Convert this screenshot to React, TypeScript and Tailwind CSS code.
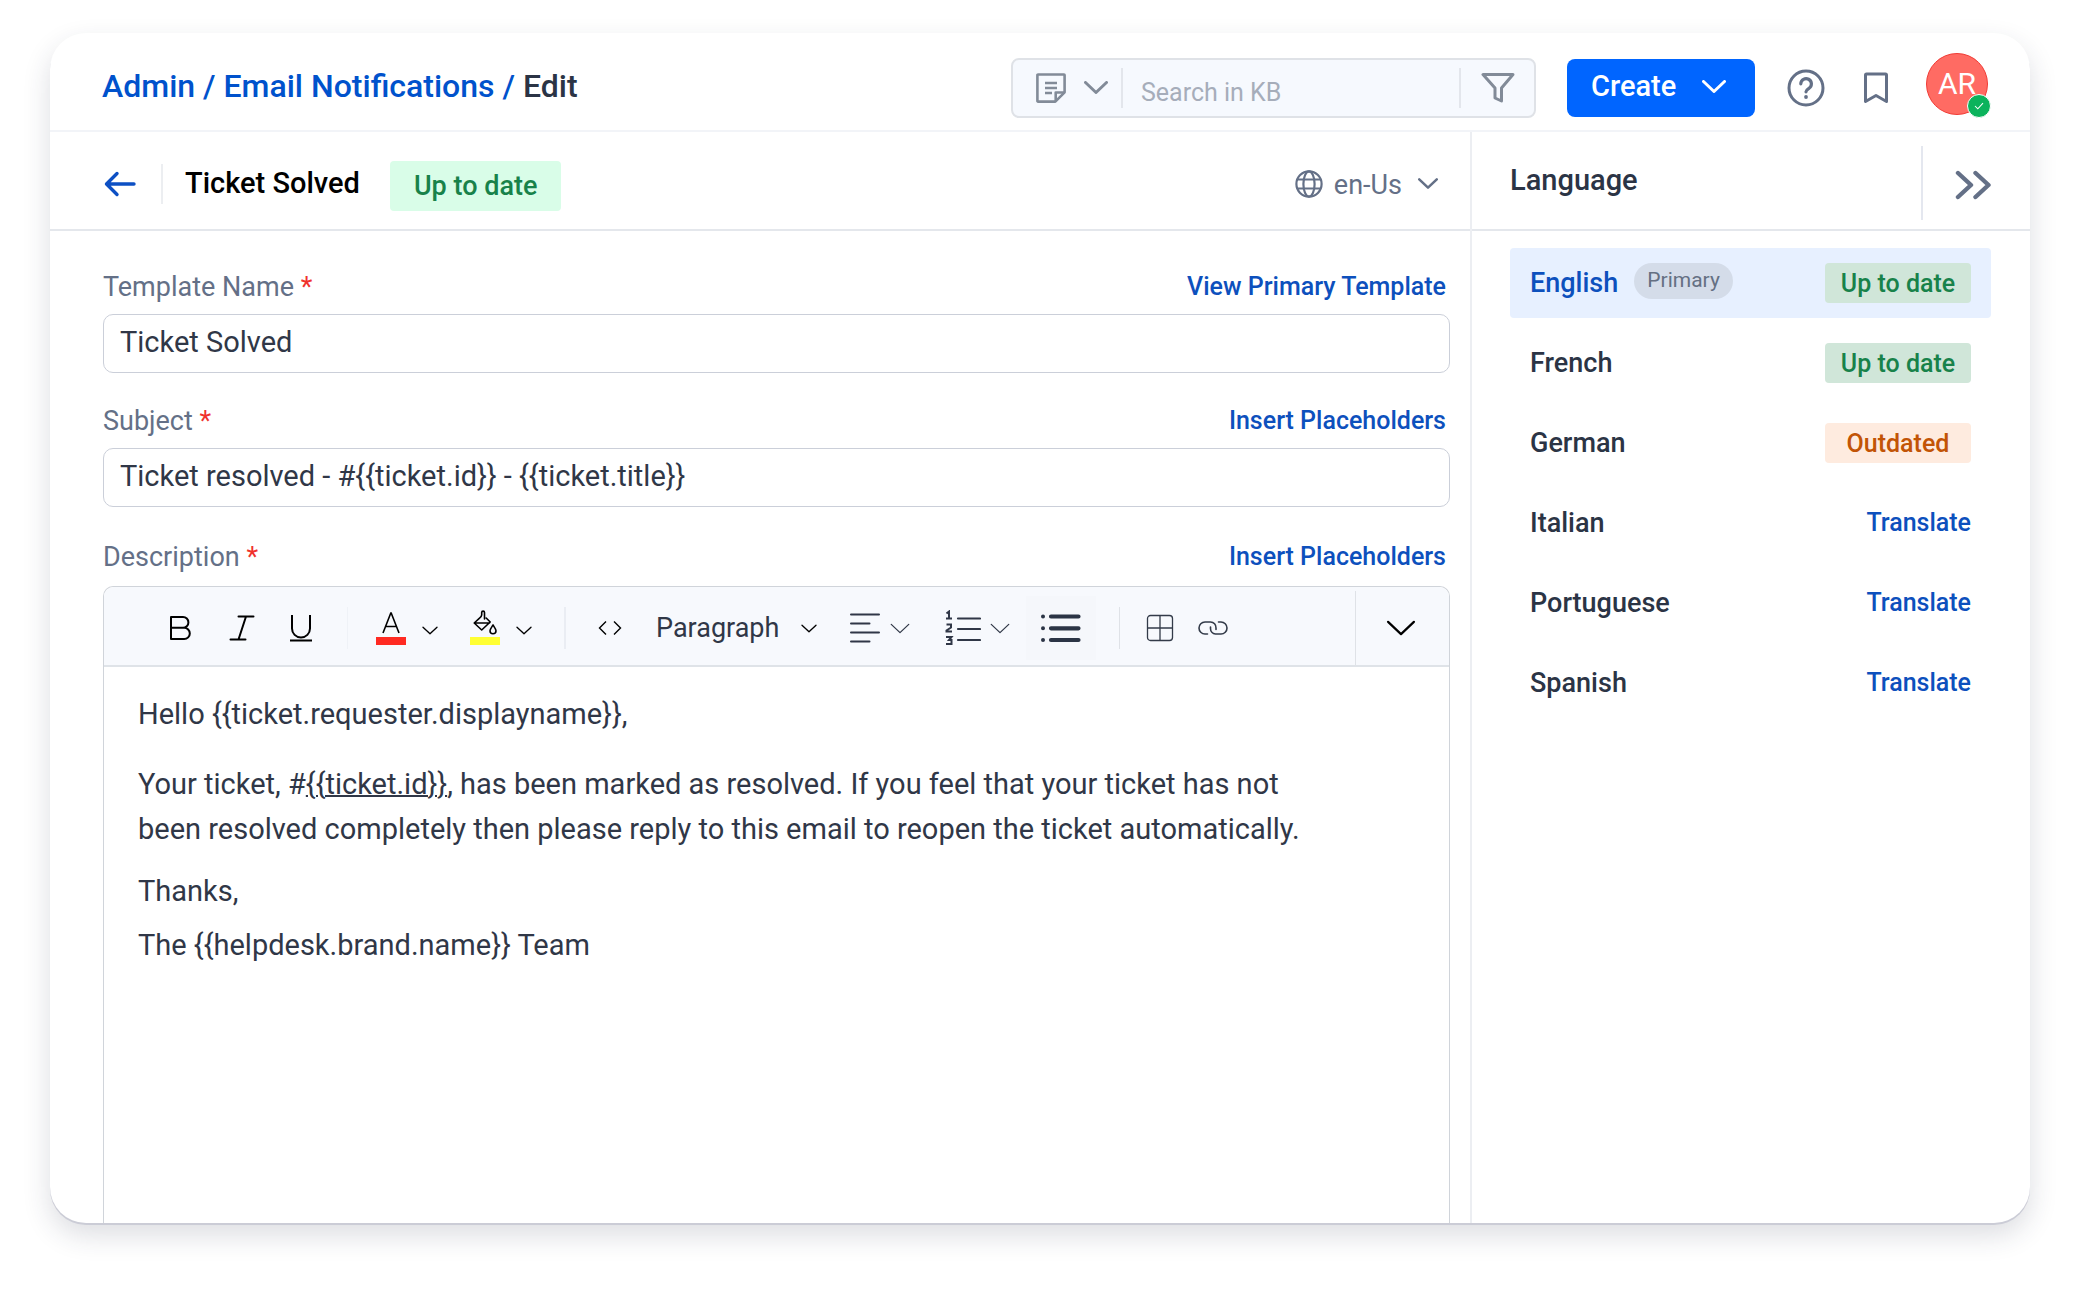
import { FC, InputHTMLAttributes, ReactElement, ReactNode } from 'react'

type IconProps = {
  className?: string
}

type LanguageStatus = 'current' | 'outdated' | 'missing'

type Language = {
  name: string
  status: LanguageStatus
  primary?: boolean
}

const languages: Language[] = [
  { name: 'English', status: 'current', primary: true },
  { name: 'French', status: 'current' },
  { name: 'German', status: 'outdated' },
  { name: 'Italian', status: 'missing' },
  { name: 'Portuguese', status: 'missing' },
  { name: 'Spanish', status: 'missing' },
]

const ChevronIcon: FC<IconProps> = ({ className }): ReactElement => (
  <svg viewBox="0 0 24 13" fill="none" stroke="currentColor" className={className}>
    <path d="M1.5 1.5 12 11.5 22.5 1.5" strokeLinecap="round" strokeLinejoin="round" />
  </svg>
)

const NoteIcon = (): ReactElement => (
  <svg viewBox="0 0 30 30" fill="none" stroke="currentColor" className="size-[30px]">
    <path d="M2 1.5h26a.6.6 0 0 1 .6.6v17.2L19.3 28.6H2a.6.6 0 0 1-.6-.6V2.100a.6.6 0 0 1 .6-.6Z" strokeWidth="2.600" strokeLinejoin="round" />
    <path d="M28.500 19.500h-8.800v9" strokeWidth="2.600" strokeLinejoin="round" />
    <path d="M9 10h12M9 15h12M9 20h7" strokeWidth="2.400" />
  </svg>
)

const FilterIcon = (): ReactElement => (
  <svg viewBox="0 0 34 30" fill="none" stroke="currentColor" className="h-[30px] w-[34px]">
    <path d="M2 1.5h30L20.5 15v13l-6.500-3V15L2 1.5Z" strokeWidth="3" strokeLinejoin="round" />
  </svg>
)

const HelpIcon = (): ReactElement => (
  <svg viewBox="0 0 38 38" fill="none" stroke="currentColor" className="size-[38px]">
    <circle cx="19" cy="19" r="17" strokeWidth="3" />
    <path d="M13.8 14.8a5.300 5.300 0 1 1 8.300 4.500c-1.900 1.200-3.100 1.900-3.100 3.500" strokeWidth="3.200" strokeLinecap="round" />
    <circle cx="19" cy="28" r="1.900" fill="currentColor" stroke="none" />
  </svg>
)

const BookmarkIcon = (): ReactElement => (
  <svg viewBox="0 0 26 32" fill="none" stroke="currentColor" className="h-8 w-[26px]">
    <path d="M3.5 2h19a1 1 0 0 1 1 1v26.5L13 23.5 2.5 29.5V3a1 1 0 0 1 1-1Z" strokeWidth="3" strokeLinejoin="round" />
  </svg>
)

const GlobeIcon = (): ReactElement => (
  <svg viewBox="0 0 28 28" fill="none" stroke="currentColor" strokeWidth="2.2" className="size-7">
    <circle cx="14" cy="14" r="12.6" />
    <ellipse cx="14" cy="14" rx="5.6" ry="12.6" />
    <path d="M2 9.5h24M2 18.5h24" />
  </svg>
)

const BackIcon = (): ReactElement => (
  <svg viewBox="0 0 32 26" fill="none" stroke="currentColor" strokeWidth="3.4" strokeLinecap="round" strokeLinejoin="round" className="h-[26px] w-8">
    <path d="M30 13H2.5M13 2.5 2.5 13 13 23.5" />
  </svg>
)

const CollapseIcon = (): ReactElement => (
  <svg viewBox="0 0 36 30" fill="none" stroke="currentColor" strokeWidth="4.400" strokeLinecap="round" strokeLinejoin="round" className="h-[30px] w-9">
    <path d="M3 3l13 12L3 27M20.5 3l13 12-13 12" />
  </svg>
)

const BoldIcon = (): ReactElement => (
  <svg viewBox="0 0 24 26" fill="none" stroke="currentColor" strokeWidth="2" strokeLinejoin="round" className="h-[26px] w-6">
    <path d="M2 2h12a5.4 5.4 0 0 1 0 10.8H2V2ZM2 12.8h13.200a5.600 5.600 0 0 1 0 11.200H2V12.800Z" />
  </svg>
)

const ItalicIcon = (): ReactElement => (
  <svg viewBox="0 0 26 26" fill="none" stroke="currentColor" strokeWidth="2" strokeLinecap="round" className="size-[26px]">
    <path d="M9.5 1.5h15M1.5 24.5h15M17 1.5 9.5 24.5" />
  </svg>
)

const UnderlineIcon = (): ReactElement => (
  <svg viewBox="0 0 24 28" fill="none" stroke="currentColor" strokeWidth="2" className="h-7 w-6">
    <path d="M3 1v13.5a9 9 0 0 0 18 0V1M1 26.5h22" />
  </svg>
)

const TextColorIcon = (): ReactElement => (
  <svg viewBox="0 0 30 36" fill="none" className="h-9 w-[30px]">
    <path d="M7 23 15 2.5 23 23M9.5 16.5h11" stroke="currentColor" strokeWidth="1.6" strokeLinejoin="bevel" />
    <path d="M0 27h30v8H0z" fill="#ff2a22" />
  </svg>
)

const FillColorIcon = (): ReactElement => (
  <svg viewBox="0 0 30 36" fill="none" className="h-9 w-[30px]">
    <g stroke="currentColor" strokeWidth="1.6" strokeLinejoin="round" strokeLinecap="round">
      <path d="M14.500 9V2.500a1.200 1.200 0 0 0-2.800 0V5c0 1.500-1.200 2.500-2.700 3.700L4.200 13l7.500 7 8.500-8-4-4M4.500 13h15" />
      <path d="M23 15c1.800 2.700 3 4.300 3 5.800a3 3 0 0 1-6 0c0-1.500 1.200-3.100 3-5.800Z" />
    </g>
    <path d="M0 27h30v8H0z" fill="#ffff33" />
  </svg>
)

const CodeIcon = (): ReactElement => (
  <svg viewBox="0 0 24 16" fill="none" stroke="currentColor" strokeWidth="1.4" className="h-4 w-6">
    <path d="M8 1.5 1.5 8 8 14.5M16 1.5 22.5 8 16 14.5" />
  </svg>
)

const AlignIcon = (): ReactElement => (
  <svg viewBox="0 0 32 32" stroke="currentColor" strokeWidth="2" strokeLinecap="round" className="size-8">
    <path d="M2 2.500h28M2 11.500h18.500M2 20.500h28M2 29.500h18.500" />
  </svg>
)

const NumberedListIcon = (): ReactElement => (
  <svg viewBox="0 0 36 36" fill="none" stroke="currentColor" className="size-9">
    <path d="M13 8.5h22M13 19h22M13 30h22" strokeWidth="2.2" strokeLinecap="round" />
    <path d="M1.5 3.5 4 1.5V8M1 8.5h6M1.500 14.500H6v3L1.500 20.500v1H7M1 27h5.500L4 30h2.500v4H1" strokeWidth="2" />
  </svg>
)

const BulletListIcon = (): ReactElement => (
  <svg viewBox="0 0 40 30" stroke="currentColor" strokeLinecap="round" className="h-[30px] w-10">
    <path d="M10 3.500h27.500M10 15.300h27.500M10 27h27.500" strokeWidth="4.200" />
    <path d="M2 3.500h.01M2 15.300h.01M2 27h.01" strokeWidth="4" />
  </svg>
)

const TableIcon = (): ReactElement => (
  <svg viewBox="0 0 28 28" fill="none" stroke="currentColor" strokeWidth="1.3" className="size-7">
    <rect x="1.5" y="1.5" width="25" height="25" rx="3" />
    <path d="M14 1.5v25M1.5 14h25" />
  </svg>
)

const LinkIcon = (): ReactElement => (
  <svg viewBox="0 0 30 16" fill="none" stroke="currentColor" strokeWidth="1.6" strokeLinecap="round" className="h-4 w-[30px]">
    <path d="M9.5 14H7A6 6 0 0 1 7 2h5.500A5.500 5.500 0 0 1 18 8v1.500" />
    <path d="M20.500 2H23a6 6 0 0 1 0 12h-5.500A5.500 5.500 0 0 1 12.500 8.500V7" />
  </svg>
)

type FieldHeaderProps = {
  id: string
  label: string
  action: ReactNode
}

type FieldProps = InputHTMLAttributes<HTMLInputElement> & FieldHeaderProps

const FieldHeader: FC<FieldHeaderProps> = ({ id, label, action }): ReactElement => (
  <div className="flex h-8 items-center justify-between pr-1">
    <label id={`${id}-label`} htmlFor={id} className="text-[27px] leading-8 text-[#647087]">
      {label} <span className="text-[#f0322d]">*</span>
    </label>
    {action}
  </div>
)

const ActionLink: FC<{ children: ReactNode }> = ({ children }): ReactElement => (
  <a href="#" className="text-[25px] leading-8 font-medium text-[#0d50bd]">
    {children}
  </a>
)

const Field: FC<FieldProps> = ({ id, label, action, ...rest }): ReactElement => (
  <div className="flex flex-col gap-[11px]">
    <FieldHeader id={id} label={label} action={action} />
    <input
      id={id}
      className="h-[59px] w-full rounded-[10px] border border-[#cbcfd9] bg-white px-4 pb-1 text-[29px] text-[#303747]"
      {...rest}
    />
  </div>
)

const TopBar = (): ReactElement => (
  <header className="flex h-[99px] items-center justify-between border-b-2 border-[#f2f4f8] pt-3 pr-[42px] pl-[52px]">
    <nav aria-label="Breadcrumb" className="pb-1 text-[32px] font-medium text-[#0052cc]">
      <a href="#">Admin</a> / <a href="#">Email Notifications</a> / <span className="text-[#2b3445]">Edit</span>
    </nav>
    <div className="flex items-center">
      <div className="flex h-[60px] w-[525px] items-center rounded-lg border-2 border-[#dfe2e7] bg-[#f6f9fe] text-[#828b98]">
        <button type="button" aria-label="Search scope" className="flex items-center gap-[18px] pr-[13px] pl-[23px]">
          <NoteIcon />
          <ChevronIcon className="h-[13px] w-6 stroke-3" />
        </button>
        <input
          aria-label="Search in KB"
          placeholder="Search in KB"
          className="h-10 min-w-0 flex-1 border-x-2 border-[#e3e6ec] px-[18px] pt-[10px] text-[25px] placeholder:text-[#a6adba]"
        />
        <button type="button" aria-label="Filter" className="pr-[19px] pl-5">
          <FilterIcon />
        </button>
      </div>
      <button type="button" className="ml-[31px] flex h-[58px] w-[188px] items-center justify-between rounded-lg bg-[#0065ff] pr-[29px] pb-0.5 pl-6 text-[29px] font-medium text-white">
        Create
        <ChevronIcon className="h-[13px] w-6 stroke-3" />
      </button>
      <button type="button" aria-label="Help" className="ml-8 text-[#647087]">
        <HelpIcon />
      </button>
      <button type="button" aria-label="Bookmarks" className="ml-[38px] text-[#647087]">
        <BookmarkIcon />
      </button>
      <button type="button" aria-label="Account" className="relative mb-2 ml-[37px] size-[62px] rounded-full border border-[#f03c36] bg-[#ff6b63] text-[30px] leading-[54px] text-white">
        AR
        <span className="absolute -right-1 -bottom-1 flex size-6 items-center justify-center rounded-full border border-white bg-[#0bb35c]">
          <svg viewBox="0 0 12 10" fill="none" stroke="currentColor" className="h-2 w-2.5">
            <path d="M1 5l3.5 3.5L11 1.5" strokeWidth="1.3" />
          </svg>
        </span>
      </button>
    </div>
  </header>
)

const TemplateBar = (): ReactElement => (
  <div className="flex h-[99px] items-center justify-between border-b-2 border-[#e4e7ec] pt-1.5 pr-8 pl-[54px]">
    <div className="flex items-center">
      <button type="button" aria-label="Back" className="text-[#0d50c4]">
        <BackIcon />
      </button>
      <div className="ml-[25px] h-10 w-0.5 bg-[#eceef1]" />
      <h1 className="ml-[22px] text-[29px] font-medium text-black">Ticket Solved</h1>
      <span className="mt-1 ml-[30px] flex h-[50px] items-center rounded-sm bg-[#d9fde8] px-6 pt-0.5 text-[27px] font-medium text-[#18824a]">
        Up to date
      </span>
    </div>
    <button type="button" className="flex items-center text-[#647087]">
      <GlobeIcon />
      <span className="mt-1 ml-[11px] text-[27px]">en-Us</span>
      <ChevronIcon className="ml-4 h-[11px] w-5 stroke-3" />
    </button>
  </div>
)

const Toolbar = (): ReactElement => (
  <div role="toolbar" className="flex h-20 items-center rounded-t-[10px] border-b-2 border-[#dfe3e8] bg-[#f7f9fd] pt-1 pl-[65px] text-black">
    <button type="button" aria-label="Bold">
      <BoldIcon />
    </button>
    <button type="button" aria-label="Italic" className="ml-9">
      <ItalicIcon />
    </button>
    <button type="button" aria-label="Underline" className="ml-[34px]">
      <UnderlineIcon />
    </button>
    <div className="ml-[34px] h-[42px] w-px bg-[#eff2f7]" />
    <button type="button" aria-label="Text color" className="ml-7 flex items-center gap-4">
      <TextColorIcon />
      <ChevronIcon className="mt-1 h-[9px] w-4 stroke-2" />
    </button>
    <button type="button" aria-label="Fill color" className="ml-8 flex items-center gap-4">
      <FillColorIcon />
      <ChevronIcon className="mt-1 h-[9px] w-4 stroke-2" />
    </button>
    <div className="ml-8 h-[42px] w-0.5 bg-[#eaedf3]" />
    <button type="button" aria-label="Code" className="ml-8">
      <CodeIcon />
    </button>
    <button type="button" className="ml-[34px] flex items-center text-[#303747]">
      <span className="w-[145px] text-left text-[27px]">Paragraph</span>
      <ChevronIcon className="h-[9px] w-4 stroke-2 text-black" />
    </button>
    <button type="button" aria-label="Align" className="ml-8 flex items-center gap-[9px] text-[#303747]">
      <AlignIcon />
      <ChevronIcon className="h-[11px] w-5 stroke-[1.5]" />
    </button>
    <button type="button" aria-label="Numbered list" className="ml-[35px] flex items-center gap-[9px] text-[#303747]">
      <NumberedListIcon />
      <ChevronIcon className="h-[11px] w-5 stroke-[1.5]" />
    </button>
    <button type="button" aria-label="Bulleted list" className="ml-4 flex h-16 w-[70px] items-center justify-center bg-[#f5f7fb] text-[#2b3445]">
      <BulletListIcon />
    </button>
    <div className="ml-[23px] h-[42px] w-px bg-[#dfe2e7]" />
    <button type="button" aria-label="Table" className="ml-[26px] text-[#333b49]">
      <TableIcon />
    </button>
    <button type="button" aria-label="Link" className="ml-6 text-[#333b49]">
      <LinkIcon />
    </button>
    <button type="button" aria-label="More" className="ml-auto flex h-[74px] w-[94px] items-center justify-center border-l border-[#dfe2e7] pr-1">
      <ChevronIcon className="h-4 w-[30px] stroke-[1.8]" />
    </button>
  </div>
)

const Editor = (): ReactElement => (
  <section className="flex flex-1 flex-col gap-[13px] pt-0.5">
    <FieldHeader id="description" label="Description" action={<ActionLink>Insert Placeholders</ActionLink>} />
    <div className="flex-1 rounded-t-[10px] border border-b-0 border-[#d0d4da]">
      <Toolbar />
      <div
        id="description"
        role="textbox"
        aria-labelledby="description-label"
        className="px-[34px] pt-[25px] text-[29px] leading-[45px] text-[#303747]"
      >
        <p>Hello {'{{ticket.requester.displayname}}'},</p>
        <p className="mt-[25px]">
          Your ticket, #<u className="decoration-2">{'{{ticket.id}}'}</u>, has been marked as resolved. If you feel that your ticket has not
          <br />
          been resolved completely then please reply to this email to reopen the ticket automatically.
        </p>
        <p className="mt-[17px]">Thanks,</p>
        <p className="mt-[9px]">The {'{{helpdesk.brand.name}}'} Team</p>
      </div>
    </div>
  </section>
)

const LanguageAction: FC<{ status: LanguageStatus }> = ({ status }): ReactElement => {
  if (status === 'missing') {
    return <ActionLink>Translate</ActionLink>
  }
  if (status === 'outdated') {
    return (
      <span className="flex h-10 w-[146px] items-center justify-center rounded-sm bg-[#feebdf] pt-0.5 text-[25px] font-medium text-[#c25406]">
        Outdated
      </span>
    )
  }
  return (
    <span className="flex h-10 w-[146px] items-center justify-center rounded-sm bg-[#d0e6d9] pt-0.5 text-[25px] font-medium text-[#18824a]">
      Up to date
    </span>
  )
}

const LanguagePanel = (): ReactElement => (
  <aside className="w-[560px] shrink-0 border-l-2 border-[#eceef2]">
    <div className="flex h-[99px] items-center justify-between border-b-2 border-[#e4e7ec] pt-1 pl-[38px]">
      <h2 className="pb-1 text-[29px] font-medium text-[#2b3445]">Language</h2>
      <button type="button" aria-label="Collapse panel" className="flex h-[74px] w-[109px] items-center border-l-2 border-[#e4e7ef] pt-1 pl-8 text-[#647087]">
        <CollapseIcon />
      </button>
    </div>
    <ul className="flex flex-col gap-2.5 py-[17px] pr-[39px] pl-[38px]">
      {languages.map(({ name, status, primary }) => (
        <li
          key={name}
          className={`flex h-[70px] items-center rounded-sm px-5 ${primary ? 'bg-[#e7f0ff]' : ''}`}
        >
          <a href="#" className={`text-[27px] font-medium ${primary ? 'text-[#0d50bd]' : 'text-[#2b3445]'}`}>
            {name}
          </a>
          {primary && (
            <span className="mb-1 ml-4 flex h-9 items-center rounded-full bg-[#d4dce9] px-[13px] text-[21px] text-[#657083]">
              Primary
            </span>
          )}
          <div className="ml-auto">
            <LanguageAction status={status} />
          </div>
        </li>
      ))}
    </ul>
  </aside>
)

const App: FC = (): ReactElement => {
  return (
    <div className="flex h-screen min-h-[1000px] flex-col bg-white px-[50px] pt-[33px] pb-[77px] font-[Roboto,'Liberation_Sans',sans-serif]">
      <div className="flex flex-1 flex-col overflow-hidden rounded-[36px] bg-white shadow-[0_2px_0_#cbccd6,0_12px_28px_rgba(40,44,70,0.16)]">
        <TopBar />
        <div className="flex flex-1">
          <main className="flex min-w-0 flex-1 flex-col">
            <TemplateBar />
            <form className="flex flex-1 flex-col gap-8 pt-10 pr-5 pl-[53px]">
              <Field
                id="template-name"
                label="Template Name"
                defaultValue="Ticket Solved"
                action={<ActionLink>View Primary Template</ActionLink>}
              />
              <Field
                id="subject"
                label="Subject"
                defaultValue="Ticket resolved - #{{ticket.id}} - {{ticket.title}}"
                action={<ActionLink>Insert Placeholders</ActionLink>}
              />
              <Editor />
            </form>
          </main>
          <LanguagePanel />
        </div>
      </div>
    </div>
  )
}

export default App
